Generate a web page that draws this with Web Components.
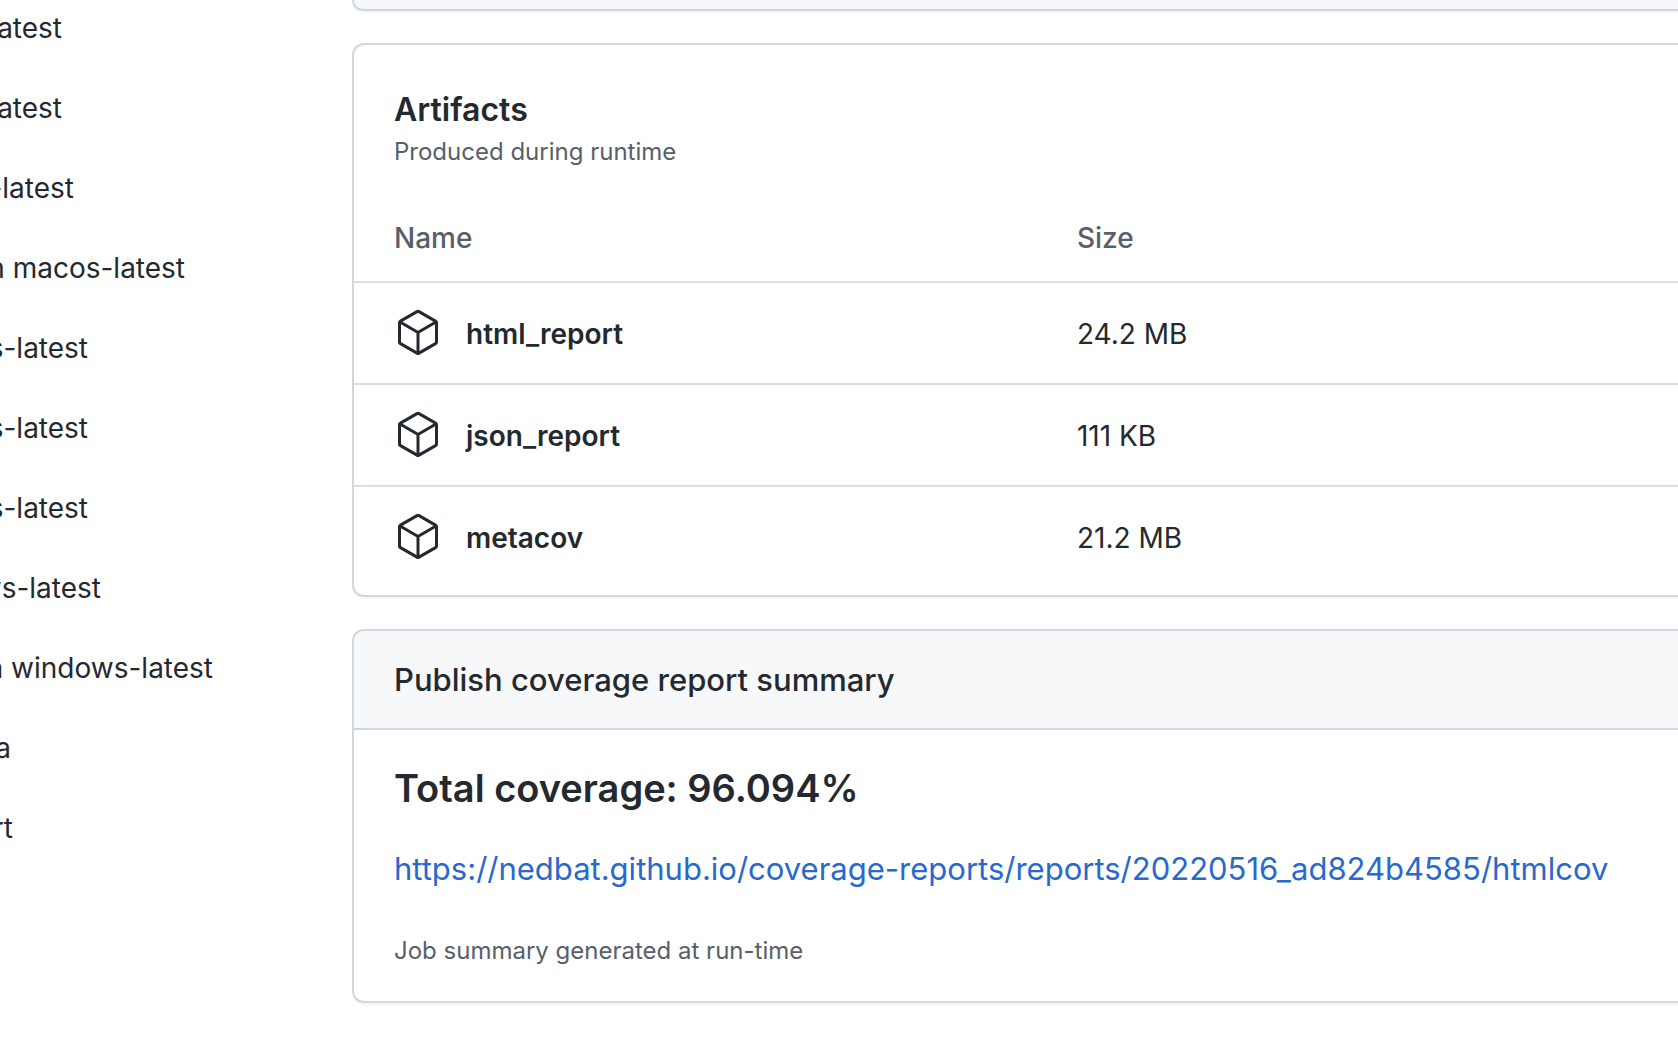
<!DOCTYPE html>
<html lang="en">
<head>
<meta charset="utf-8">
<meta name="viewport" content="width=device-width, initial-scale=1">
<title>Workflow run summary</title>
<style>
  :root {
    --fg: #24292f;
    --muted: #57606a;
    --accent: #2969cc;
    --border: #d0d7de;
    --row-border: #d8dee4;
    --subtle: #f6f8fa;
  }

  body {
    margin: 0;
    background: #fff;
    color: var(--fg);
    font: 28px/40px Inter, "Liberation Sans", sans-serif;
  }
</style>
</head>
<body>
<run-page>
  <job-list slot="side">
    <job-link edge="62">atest</job-link>
    <job-link edge="62">atest</job-link>
    <job-link edge="74">-latest</job-link>
    <job-link edge="185">n macos-latest</job-link>
    <job-link edge="88">s-latest</job-link>
    <job-link edge="88">s-latest</job-link>
    <job-link edge="88">s-latest</job-link>
    <job-link edge="101">ws-latest</job-link>
    <job-link edge="213">n windows-latest</job-link>
    <job-link edge="11">a</job-link>
    <job-link edge="13">rt</job-link>
  </job-list>

  <run-card cut></run-card>
  <run-card>
    <artifact-list></artifact-list>
  </run-card>
  <run-card>
    <job-summary href="https://nedbat.github.io/coverage-reports/reports/20220516_ad824b4585/htmlcov">
      <span slot="title">Publish coverage report summary</span>
      <span slot="total">Total coverage: 96.094%</span>
      <span slot="note">Job summary generated at run-time</span>
    </job-summary>
  </run-card>
</run-page>

<script>
// shared base: every element clones its template into an open shadow root
class Base extends HTMLElement {
  constructor() {
    super(); // !required!
    const temp = document.createElement("template");
    temp.innerHTML = this.constructor.template();
    this.dom = this.attachShadow({ mode: "open" });
    this.dom.appendChild(temp.content.cloneNode(true));
  }

  static register(tag) {
    if (window.customElements.get(tag) === undefined) {
      window.customElements.define(tag, this);
    }
  }
}

class RunPage extends Base {
  static template() {
    return `
<style>
  :host {
    display: grid;
    grid-template-columns: 352px minmax(0, 1fr);
    overflow: hidden;
  }
  main {
    display: flex;
    flex-direction: column;
    gap: 32px;
    padding-bottom: 32px;
  }
</style>
<slot name="side"></slot>
<main><slot></slot></main>
`;
  }
}

class JobList extends Base {
  static template() {
    return `
<style>
  :host { display: block; }
  nav {
    display: flex;
    flex-direction: column;
    gap: 40px;
    padding-top: 8px;
  }
</style>
<nav aria-label="Jobs"><slot></slot></nav>
`;
  }
}

class JobLink extends Base {
  static template() {
    return `
<style>
  :host { display: block; }
  /* the list is scrolled sideways, so names run off on the left */
  a {
    display: flex;
    justify-content: flex-end;
    overflow: hidden;
    white-space: nowrap;
    color: inherit;
    text-decoration: none;
  }
</style>
<a href="#job"><slot></slot></a>
`;
  }

  connectedCallback() {
    this.style.width = `${this.getAttribute("edge")}px`;
  }
}

class RunCard extends Base {
  static template() {
    return `
<style>
  :host {
    display: block;
    border: 2px solid var(--border);
    border-right: 0;
    border-radius: 12px 0 0 12px;
    box-shadow: 0 2px 0 rgba(27, 31, 36, .04);
    overflow: hidden;
  }
  /* card that is mostly scrolled out at the top */
  :host([cut]) {
    height: 9px;
    border-top: 0;
    border-radius: 0 0 0 12px;
    background: var(--subtle);
  }
</style>
<slot></slot>
`;
  }
}

class PackageIcon extends Base {
  static template() {
    return `
<style>
  :host { display: block; flex: none; }
  svg { display: block; fill: currentColor; }
</style>
<svg width="48" height="48" viewBox="0 0 24 24" aria-hidden="true">
  <path fill-rule="evenodd" d="M12.876.64a1.75 1.75 0 00-1.75 0l-8.25 4.762a1.75 1.75 0 00-.875 1.515v9.525c0 .625.334 1.203.875 1.515l8.25 4.763a1.75 1.75 0 001.75 0l8.25-4.762a1.75 1.75 0 00.875-1.516V6.917a1.75 1.75 0 00-.875-1.515L12.876.639zm-1 1.298a.25.25 0 01.25 0l7.625 4.402-7.75 4.474-7.75-4.474 7.625-4.402zM3.501 7.64v8.803c0 .09.048.172.125.216l7.625 4.402v-8.947L3.501 7.64zm9.25 13.421l7.625-4.402a.25.25 0 00.125-.216V7.639l-7.75 4.474v8.948z"/>
</svg>
`;
  }
}

const artifacts = [
  { name: "html_report", size: "24.2 MB" },
  { name: "json_report", size: "111 KB" },
  { name: "metacov", size: "21.2 MB" }
];

class ArtifactList extends Base {
  static template() {
    const rows = artifacts
      .map(
        i => `
    <tr>
      <td><div class="name"><package-icon></package-icon><a href="#${i.name}">${i.name}</a></div></td>
      <td>${i.size}</td>
    </tr>`
      )
      .join("");

    return `
<style>
  :host { display: block; padding: 41px 0 8px; }
  h2, p { margin: 0; padding: 0 40px; }
  h2 { font-size: 32px; line-height: 48px; font-weight: 600; }
  p { font-size: 24px; line-height: 36px; color: var(--muted); }
  table { width: 100%; table-layout: fixed; border-collapse: separate; border-spacing: 0; }
  th, td { padding: 0 8px; text-align: left; }
  th { padding-top: 48px; padding-bottom: 23px; font-weight: 500; color: var(--muted); }
  th:first-child { width: 54%; box-sizing: border-box; }
  th:first-child, td:first-child { padding-left: 40px; padding-right: 0; }
  td { height: 98px; padding-top: 2px; border-top: 2px solid var(--row-border); }
  .name { display: flex; align-items: center; gap: 24px; }
  package-icon { margin-bottom: 2px; }
  a { color: inherit; font-weight: 600; text-decoration: none; }
</style>
<h2>Artifacts</h2>
<p>Produced during runtime</p>
<table>
  <thead>
    <tr><th scope="col">Name</th><th scope="col">Size</th></tr>
  </thead>
  <tbody>${rows}
  </tbody>
</table>
`;
  }
}

class JobSummary extends Base {
  static template() {
    return `
<style>
  :host { display: block; }
  h2, h3, p { margin: 0; }
  h3 {
    padding: 24px 40px;
    border-bottom: 2px solid var(--border);
    background: var(--subtle);
    font-size: 31px;
    line-height: 49px;
    font-weight: 500;
  }
  .body { padding: 33px 40px 32px; }
  h2 { font-size: 38px; line-height: 50px; font-weight: 600; }
  .link { margin: 32px 0 40px; font-size: 31px; line-height: 48px; white-space: nowrap; }
  .note { font-size: 24px; line-height: 36px; color: var(--muted); }
  a { color: var(--accent); text-decoration: none; }
</style>
<h3><slot name="title"></slot></h3>
<div class="body">
  <h2><slot name="total"></slot></h2>
  <p class="link"><a></a></p>
  <p class="note"><slot name="note"></slot></p>
</div>
`;
  }

  connectedCallback() {
    const link = this.dom.querySelector("a");
    link.href = this.getAttribute("href");
    link.textContent = this.getAttribute("href");
  }
}

RunPage.register("run-page");
JobList.register("job-list");
JobLink.register("job-link");
RunCard.register("run-card");
PackageIcon.register("package-icon");
ArtifactList.register("artifact-list");
JobSummary.register("job-summary");
</script>
</body>
</html>
